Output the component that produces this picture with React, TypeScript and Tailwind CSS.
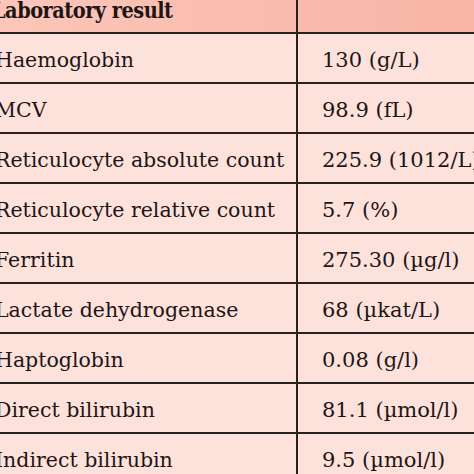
import React from 'react';

const rows: [string, string][] = [
  ['Haemoglobin', '130 (g/L)'],
  ['MCV', '98.9 (fL)'],
  ['Reticulocyte absolute count', '225.9 (1012/L)'],
  ['Reticulocyte relative count', '5.7 (%)'],
  ['Ferritin', '275.30 (µg/l)'],
  ['Lactate dehydrogenase', '68 (µkat/L)'],
  ['Haptoglobin', '0.08 (g/l)'],
  ['Direct bilirubin', '81.1 (µmol/l)'],
  ['Indirect bilirubin', '9.5 (µmol/l)'],
];

const App: React.FC = () => {
  return (
    <div className="w-[474px] h-[474px] overflow-hidden bg-[#fde1db] text-[#1e1616]" style={{ fontFamily: '"DejaVu Serif", serif' }}>
      <div className="-ml-[5px] w-[540px]">
        <div className="grid grid-cols-[303px_1fr] h-[34px] bg-gradient-to-r from-[#fbc6b9] to-[#f8b2a3] border-b-2 border-[#2a2020]">
          <div className="border-r-2 border-[#2a2020] overflow-hidden">
            <div
              className="text-[21.5px] font-bold leading-[22px] mt-[0px] -ml-[3px] whitespace-nowrap tracking-[-0.5px]"
              style={{ fontFamily: '"DejaVu Serif Condensed", "DejaVu Serif", serif' }}
            >
              Laboratory result
            </div>
          </div>
          <div />
        </div>
        {rows.map(([label, value]) => (
          <div key={label} className="grid grid-cols-[303px_1fr] h-[50px] border-b-2 border-[#2a2020]">
            <div className="border-r-2 border-[#2a2020] text-[20.5px] flex items-center pt-[5px] whitespace-nowrap overflow-hidden">{label}</div>
            <div className="text-[21px] flex items-center pt-[5px] pl-[24px] whitespace-nowrap">{value}</div>
          </div>
        ))}
      </div>
    </div>
  );
};

export default App;
